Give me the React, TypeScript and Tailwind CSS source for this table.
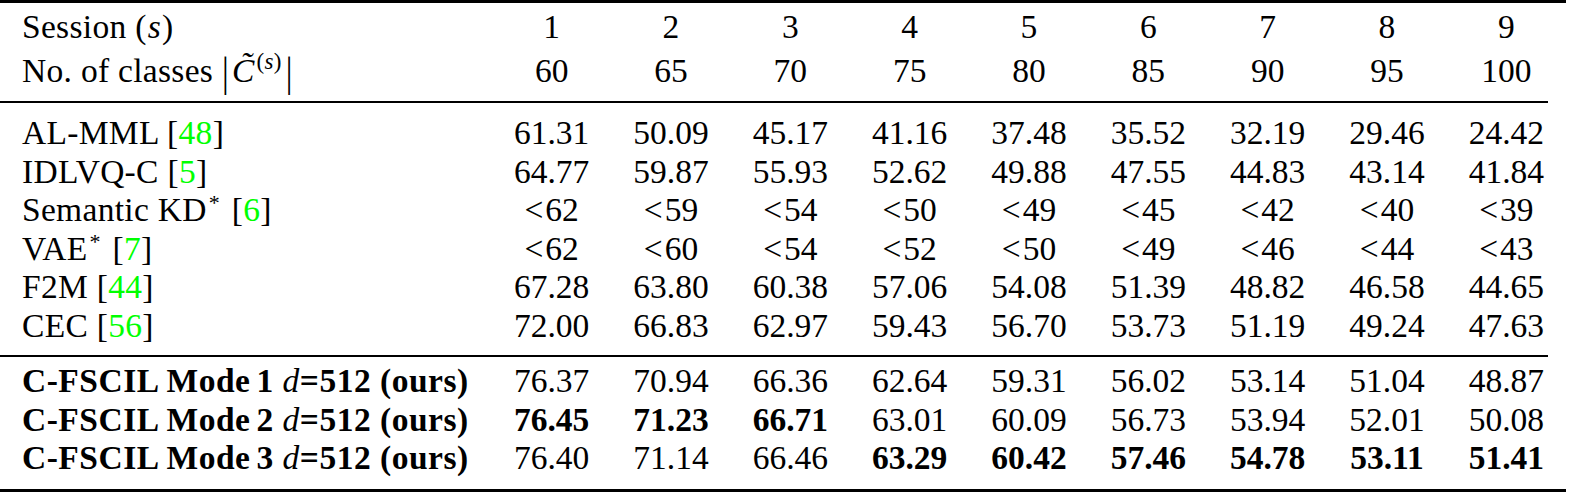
import type { ReactNode } from "react";

type Row = { name: ReactNode; cite: string; vals: string[] };

const baselines: Row[] = [
  { name: "AL-MML", cite: "48", vals: ["61.31", "50.09", "45.17", "41.16", "37.48", "35.52", "32.19", "29.46", "24.42"] },
  { name: "IDLVQ-C", cite: "5", vals: ["64.77", "59.87", "55.93", "52.62", "49.88", "47.55", "44.83", "43.14", "41.84"] },
  {
    name: (
      <>
        Semantic KD<Star />
      </>
    ),
    cite: "6",
    vals: ["<62", "<59", "<54", "<50", "<49", "<45", "<42", "<40", "<39"],
  },
  {
    name: (
      <>
        VAE<Star />
      </>
    ),
    cite: "7",
    vals: ["<62", "<60", "<54", "<52", "<50", "<49", "<46", "<44", "<43"],
  },
  { name: "F2M", cite: "44", vals: ["67.28", "63.80", "60.38", "57.06", "54.08", "51.39", "48.82", "46.58", "44.65"] },
  { name: "CEC", cite: "56", vals: ["72.00", "66.83", "62.97", "59.43", "56.70", "53.73", "51.19", "49.24", "47.63"] },
];

const ours = [
  { mode: "1", vals: ["76.37", "70.94", "66.36", "62.64", "59.31", "56.02", "53.14", "51.04", "48.87"], bold: [] as number[] },
  { mode: "2", vals: ["76.45", "71.23", "66.71", "63.01", "60.09", "56.73", "53.94", "52.01", "50.08"], bold: [0, 1, 2] },
  { mode: "3", vals: ["76.40", "71.14", "66.46", "63.29", "60.42", "57.46", "54.78", "53.11", "51.41"], bold: [3, 4, 5, 6, 7, 8] },
];

// math-style superscript asterisk, kept out of the line box height
function Star() {
  return <span className="relative -top-[11px] ml-[2px] mr-[3px] text-[22px] leading-[0px]">*</span>;
}

function Cell({ v, bold }: { v: string; bold?: boolean }) {
  const lt = v.startsWith("<");
  return (
    <div className={`text-center ${bold ? "font-bold" : ""}`}>
      {lt ? (
        <>
          &lt;<span className="ml-[2px]">{v.slice(1)}</span>
        </>
      ) : (
        v
      )}
    </div>
  );
}

const grid = "grid grid-cols-[492px_repeat(9,minmax(0,1fr))] w-[1566px]";

export default function App() {
  return (
    <div className="bg-white w-[1571px] h-[495px] overflow-hidden text-black font-['Liberation_Serif',serif] text-[33.5px]">
      <div className="h-[3px] w-[1566px] bg-black" />

      {/* header */}
      <div className={`${grid} h-[43px] pt-[5px] leading-[38px]`}>
        <div className="pl-[22px] tracking-[0.3px]">
          Session (<i className="mx-[1px]">s</i>)
        </div>
        {[1, 2, 3, 4, 5, 6, 7, 8, 9].map((n) => (
          <div key={n} className="text-center">
            {n}
          </div>
        ))}
      </div>
      <div className={`${grid} h-[55px] pt-[6px] leading-[38px]`}>
        <div className="pl-[22px] whitespace-nowrap tracking-[0.3px]">
          No. of classes{" "}
          <span className="inline-block leading-[0px] scale-y-[1.25] translate-y-[1px] mr-[3px]">|</span>
          <i className="leading-[0px]">C&#771;</i>
          <span className="relative -top-[13px] ml-[2px] text-[23px] leading-[0px]">
            (<i>s</i>)
          </span>
          <span className="inline-block leading-[0px] scale-y-[1.25] translate-y-[1px] ml-[4px]">|</span>
        </div>
        {[60, 65, 70, 75, 80, 85, 90, 95, 100].map((n) => (
          <div key={n} className="text-center">
            {n}
          </div>
        ))}
      </div>

      <div className="h-[2px] w-[1548px] bg-black" />

      {/* prior methods */}
      <div className="pt-[11px] pb-[10px]">
        {baselines.map((r, i) => (
          <div key={i} className={`${grid} h-[38.5px] leading-[38.5px]`}>
            <div className="pl-[22px] whitespace-nowrap tracking-[0.3px]">
              {r.name} [<span className="text-[#00ff00]">{r.cite}</span>]
            </div>
            {r.vals.map((v, j) => (
              <Cell key={j} v={v} />
            ))}
          </div>
        ))}
      </div>

      <div className="h-[2px] w-[1548px] bg-black" />

      {/* ours */}
      <div className="pt-[5px] pb-[11px]">
        {ours.map((r) => (
          <div key={r.mode} className={`${grid} h-[38.5px] leading-[38.5px]`}>
            <div className="pl-[22px] whitespace-nowrap font-bold tracking-[0.5px]">
              C-FSCIL Mode<span className="ml-[6px]">{r.mode}</span> <i className="font-normal">d</i>=512 (ours)
            </div>
            {r.vals.map((v, j) => (
              <Cell key={j} v={v} bold={r.bold.includes(j)} />
            ))}
          </div>
        ))}
      </div>

      <div className="h-[3px] w-[1566px] bg-black" />
    </div>
  );
}
